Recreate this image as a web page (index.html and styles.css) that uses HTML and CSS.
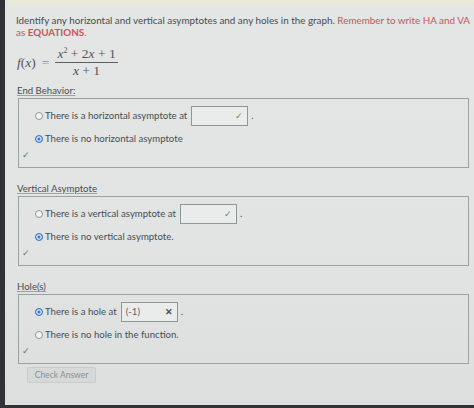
FILE: index.html
```html
<!DOCTYPE html>
<html lang="en">
<head>
    <meta charset="UTF-8">
    <title>Asymptotes and Holes</title>
    <link rel="stylesheet" href="styles.css">
</head>
<body>
    <div class="screen">
        <p class="prompt">
            <span>Identify any horizontal and vertical asymptotes and any holes in the graph.</span>
            <span class="note">Remember to write HA and VA</span><br>
            <span class="note">as <b>EQUATIONS</b>.</span>
        </p>

        <div class="formula">
            <span class="fx"><i>f</i>(<i>x</i>)</span>
            <span class="eq">=</span>
            <span class="frac">
                <span class="num"><i>x</i><sup>2</sup> + 2<i>x</i> + 1</span>
                <span class="den"><i>x</i> + 1</span>
            </span>
        </div>

        <div class="part">
            <div class="part-label">End Behavior:</div>
            <div class="part-box">
                <div class="option">
                    <span class="radio"></span>
                    <span>There is a horizontal asymptote at</span>
                    <span class="answer"><span class="value"></span><span class="mark ok">&#10003;</span></span><span class="dot">.</span>
                </div>
                <div class="option">
                    <span class="radio on"></span>
                    <span>There is no horizontal asymptote</span>
                </div>
                <div class="part-check">&#10003;</div>
            </div>
        </div>

        <div class="part">
            <div class="part-label">Vertical Asymptote</div>
            <div class="part-box">
                <div class="option">
                    <span class="radio"></span>
                    <span>There is a vertical asymptote at</span>
                    <span class="answer"><span class="value"></span><span class="mark ok">&#10003;</span></span><span class="dot">.</span>
                </div>
                <div class="option">
                    <span class="radio on"></span>
                    <span>There is no vertical asymptote.</span>
                </div>
                <div class="part-check">&#10003;</div>
            </div>
        </div>

        <div class="part">
            <div class="part-label">Hole(s)</div>
            <div class="part-box">
                <div class="option">
                    <span class="radio on"></span>
                    <span>There is a hole at</span>
                    <span class="answer"><span class="value">(-1)</span><span class="mark bad">&#10005;</span></span><span class="dot">.</span>
                </div>
                <div class="option">
                    <span class="radio"></span>
                    <span>There is no hole in the function.</span>
                </div>
                <div class="part-check">&#10003;</div>
            </div>
        </div>

        <button class="check-btn">Check Answer</button>
    </div>
</body>
</html>
```

FILE: styles.css
```css
* {
    box-sizing: border-box;
    margin: 0;
    padding: 0;
}

body {
    width: 474px;
    height: 408px;
    overflow: hidden;
    background: #2f3236;
    font-family: Lato, 'Liberation Sans', sans-serif;
    color: #474d52;
}

.screen {
    height: 405px;
    margin-left: 5px;
    padding: 14px 0 0 11px;
    background: linear-gradient(180deg, #e9ead8 0, #e3e6e4 9px, #e1e4e3 60%, #dcdfde 100%);
}

.prompt {
    font-size: 9.85px;
    line-height: 12px;
    width: 458px;
}

.note {
    color: #c8545d;
}

.note b {
    font-weight: 700;
}

.formula {
    display: flex;
    align-items: center;
    gap: 6px;
    margin: 9px 0 7px 1px;
    font-family: 'Liberation Serif', serif;
    font-size: 13.5px;
    color: #4f565a;
}

.eq {
    color: #8a9093;
}

.frac {
    display: flex;
    flex-direction: column;
    align-items: center;
}

.num {
    padding: 0 2px 1px;
    border-bottom: 1px solid #5a6064;
    line-height: 14px;
}

.num sup {
    font-size: 8px;
    line-height: 0;
}

.den {
    padding-top: 1px;
    line-height: 14px;
}

.part-label {
    font-size: 9.6px;
    line-height: 12px;
    margin-left: 1px;
    text-decoration: underline;
    text-decoration-color: #9aa2a3;
}

.part-box {
    width: 451px;
    margin: 1px 0 15px 2px;
    border: 1px solid #9aa3a3;
    padding: 5px 0 7px 16px;
}

.option {
    display: flex;
    align-items: center;
    gap: 2px;
    height: 23px;
    font-size: 9.6px;
}

.radio {
    width: 8px;
    height: 8px;
    border-radius: 50%;
    border: 1px solid #8f989b;
    background: #f2f3f2;
}

.radio.on {
    border-color: #3f78c8;
    background: #3f78c8;
    box-shadow: inset 0 0 0 1.5px #d6e3f3;
}

.answer {
    display: flex;
    align-items: center;
    justify-content: space-between;
    width: 57px;
    height: 20px;
    margin-left: 2px;
    padding: 0 4px;
    border: 1px solid #8e9898;
    background: #e9ecea;
}

.value {
    color: #5a6266;
}

.mark {
    font-size: 9px;
}

.mark.ok {
    color: #5f8a5c;
}

.mark.bad {
    color: #4a4f54;
    font-weight: 700;
}

.dot {
    margin-left: 1px;
}

.part-check {
    margin-left: -13px;
    line-height: 10px;
    font-size: 9px;
    color: #5c7a52;
}

.check-btn {
    display: block;
    margin: -12px 0 0 11px;
    width: 69px;
    height: 16px;
    border: 1px solid #c9cccb;
    border-radius: 2px;
    background: #d6d9d8;
    font-family: Lato, 'Liberation Sans', sans-serif;
    font-size: 8.5px;
    color: #8a9194;
}
```
